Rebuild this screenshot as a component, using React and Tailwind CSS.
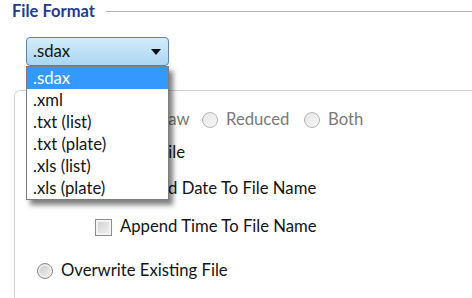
import React from "react";

const options = [".sdax", ".xml", ".txt (list)", ".txt (plate)", ".xls (list)", ".xls (plate)"];

const Radio = ({ disabled }) => (
  <span
    className={
      "inline-block w-[16px] h-[16px] rounded-full border shrink-0 " +
      (disabled
        ? "border-[#b4b4b4] bg-gradient-to-br from-[#e6e6e6] to-[#f7f7f7]"
        : "border-[#8c8c8c] bg-gradient-to-br from-[#c8c8c8] to-[#f4f4f4] shadow-[inset_0_0_0_2px_#ececec]")
    }
  />
);

const Checkbox = () => (
  <span className="inline-block w-[17px] h-[17px] border border-[#8e8e8e] bg-gradient-to-br from-[#cfcfcf] to-[#f3f3f3] shadow-[inset_0_0_0_2px_#f4f4f4] shrink-0" />
);

export default function App() {
  return (
    <div
      className="relative w-[472px] h-[298px] overflow-hidden bg-white text-[#141414]"
      style={{ fontFamily: "Lato, 'Noto Sans', sans-serif" }}
    >
      {/* header */}
      <div className="flex items-center pl-[12px] pt-[1px] h-[22px]">
        <span className="font-bold text-[16.5px] text-[#243c8c] leading-none">File Format</span>
        <div className="flex-1 h-px bg-[#b4b4b4] ml-[11px]" />
      </div>

      {/* select */}
      <div className="relative ml-[26px] mt-[15px] w-[143px] z-10">
        <div className="h-[29px] flex items-center justify-between pl-[6px] pr-[7px] rounded-[4px] border border-[#5c86a8] bg-gradient-to-b from-[#d4ecfa] to-[#a9d5f1] text-[16.7px]">
          <span>.sdax</span>
          <svg width="10" height="6" viewBox="0 0 10 6">
            <path d="M0 0 L10 0 L5 6 Z" fill="#111" />
          </svg>
        </div>
        <div className="absolute left-0 top-[29px] w-[143px] bg-white border border-[#7d7d7d] shadow-[4px_5px_5px_rgba(0,0,0,0.5)]">
          {options.map((o, i) => (
            <div
              key={o}
              className={
                "h-[22px] leading-[22px] pl-[6px] text-[16.7px] " +
                (i === 0 ? "bg-[#3399ff] text-white" : "")
              }
            >
              {o}
            </div>
          ))}
        </div>
      </div>

      {/* panel */}
      <div className="ml-[14px] mt-[24px] h-[220px] border-l border-t border-[#d4d4d4] rounded-tl-[6px] pl-[22px] pt-[19px] text-[16.7px]">
        <div className="flex items-center h-[20px]">
          <span className="w-[98px]">Output:</span>
          <span className="flex items-center gap-[7px] w-[67px] text-[#7a7a7a]">
            <Radio disabled />
            Raw
          </span>
          <span className="flex items-center gap-[8px] w-[102px] text-[#7a7a7a]">
            <Radio disabled />
            Reduced
          </span>
          <span className="flex items-center gap-[8px] text-[#7a7a7a]">
            <Radio disabled />
            Both
          </span>
        </div>

        <div className="flex items-center gap-[8px] h-[20px] mt-[13px]">
          <Radio />
          <span>Save To New File</span>
        </div>

        <div className="flex items-center gap-[8px] h-[20px] mt-[16px] ml-[58px]">
          <Checkbox />
          <span>Append Date To File Name</span>
        </div>

        <div className="flex items-center gap-[8px] h-[20px] mt-[18px] ml-[58px]">
          <Checkbox />
          <span>Append Time To File Name</span>
        </div>

        <div className="flex items-center gap-[8px] h-[20px] mt-[24px]">
          <Radio />
          <span>Overwrite Existing File</span>
        </div>
      </div>
    </div>
  );
}
